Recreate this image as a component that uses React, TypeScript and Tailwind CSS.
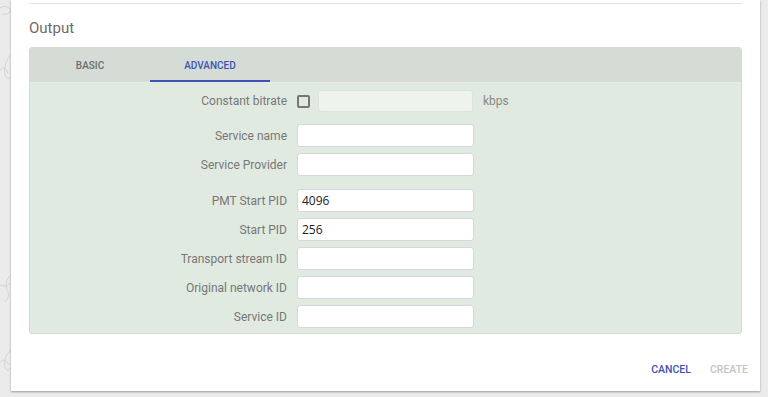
import React from "react";

const font = { fontFamily: "Roboto, 'Liberation Sans', sans-serif" };

type Row = { label: string; value?: string };

const groups: Row[][] = [
  [{ label: "Service name" }, { label: "Service Provider" }],
  [
    { label: "PMT Start PID", value: "4096" },
    { label: "Start PID", value: "256" },
    { label: "Transport stream ID" },
    { label: "Original network ID" },
    { label: "Service ID" },
  ],
];

const Field = ({ label, value }: Row) => (
  <div className="flex items-center h-[23px]">
    <div className="w-[267px] pr-[10px] text-right text-[12px] text-[#777]">{label}</div>
    <input
      readOnly
      value={value ?? ""}
      className="w-[177px] h-[23px] bg-white border border-[#d4d8dc] rounded-[3px] px-[4px] text-[12px] text-[#222] outline-none"
      style={{ fontFamily: "'Open Sans', 'DejaVu Sans', sans-serif" }}
    />
  </div>
);

const Doodles = () => (
  <svg width="11" height="397" className="block shrink-0" fill="none" stroke="#d4d4d4" strokeWidth="1">
    <path d="M0 8 q6 -4 11 2 M2 14 q5 2 9 -3" />
    <path d="M11 55 q-8 8 -6 20 q3 6 6 2 M0 70 q5 -6 8 4" />
    <path d="M11 275 q-7 5 -4 15 q4 6 -2 12 M0 285 q6 3 11 -2" />
    <path d="M11 350 q-8 6 -6 18 q3 4 6 0 M0 362 q5 -5 9 3" />
  </svg>
);

export default function App() {
  return (
    <div className="w-full h-[397px] bg-[#ebebeb] flex overflow-hidden" style={font}>
      <Doodles />
      <div className="w-[749px] shrink-0 h-[391px] bg-white shadow-[0_1px_2px_rgba(0,0,0,0.35)] px-[18px] flex flex-col">
        <div className="mt-[3px] h-[1px] bg-[#e2e2e2]" />
        <div className="mt-[15px] text-[15px] leading-[18px] text-[#6b6b6b]">Output</div>
        <div className="mt-[10px] rounded-[3px] border border-[#d3dbd3] bg-[#e1eae1] overflow-hidden">
          <div className="h-[35px] bg-[#d5dcd5] flex border-b border-[#e8ece8]">
            <div className="w-[120px] flex items-center justify-center text-[10px] font-medium text-[#6d6d6d]">BASIC</div>
            <div className="w-[120px] flex items-center justify-center text-[10px] font-medium text-[#3f51b5] border-b-2 border-[#3f51b5] pt-[2px]">
              ADVANCED
            </div>
          </div>
          <div className="pt-[7px] pb-[5px] flex flex-col">
            <div className="flex items-center h-[22px]">
              <div className="w-[267px] pr-[10px] text-right text-[12px] text-[#777]">Constant bitrate</div>
              <div className="w-[13px] h-[13px] border-2 border-[#767676] rounded-[2px]" />
              <div className="ml-[8px] w-[155px] h-[22px] bg-[#eef3ee] border border-[#dde4dd] rounded-[3px]" />
              <span className="ml-[10px] text-[12px] text-[#888]">kbps</span>
            </div>
            {groups.map((g, i) => (
              <div key={i} className={`${i === 0 ? "mt-[12px]" : "mt-[13px]"} flex flex-col gap-[6px]`}>
                {g.map((r) => (
                  <Field key={r.label} {...r} />
                ))}
              </div>
            ))}
          </div>
        </div>
        <div className="mt-auto mb-[13px] -mr-[6px] flex justify-end gap-[19px] text-[10.5px] font-medium">
          <span className="text-[#3f51b5]">CANCEL</span>
          <span className="text-[#c4c4c4]">CREATE</span>
        </div>
      </div>
      <div className="flex-1" />
    </div>
  );
}
